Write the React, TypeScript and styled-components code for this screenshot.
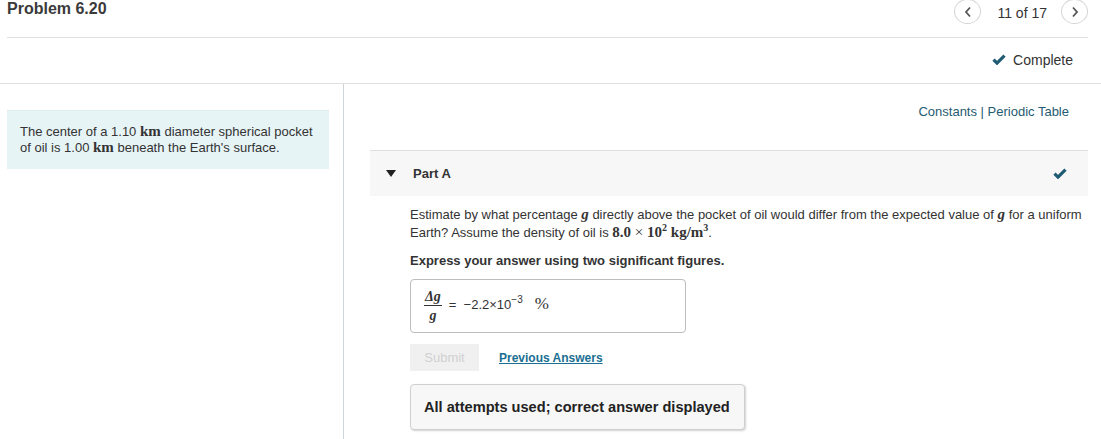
import React from 'react'
import styled, { createGlobalStyle } from 'styled-components'

const GlobalStyle = createGlobalStyle`
  body {
    margin: 0;
    background: #fff;
    font-family: "Liberation Sans", Arial, sans-serif;
    color: #333;
  }
`

const Page = styled.div`
  width: 1101px;
  height: 439px;
  overflow: hidden;
`

const TopBar = styled.div`
  display: flex;
  align-items: flex-start;
  justify-content: space-between;
  margin: 0 13px 0 7px;
  height: 37px;
  border-bottom: 1px solid #e0e0e0;
`

const Title = styled.div`
  font-size: 16px;
  font-weight: bold;
  color: #3a3a3a;
  line-height: 18px;
`

const Pager = styled.div`
  display: flex;
  align-items: center;
  margin-top: -1px;
`

const Circle = styled.div`
  width: 25px;
  height: 23px;
  border: 1px solid #d4d4d4;
  border-radius: 50%;
  display: flex;
  align-items: center;
  justify-content: center;
`

const PageCount = styled.span`
  font-size: 14px;
  color: #333;
  margin: 0 14px 0 16px;
  padding-top: 2px;
`

const StatusRow = styled.div`
  height: 45px;
  border-bottom: 1px solid #e0e0e0;
  display: flex;
  align-items: center;
  justify-content: flex-end;
  padding-right: 28px;
`

const Status = styled.div`
  display: flex;
  align-items: center;
  gap: 7px;
  font-size: 14px;
  color: #333;
  margin-top: -2px;
`

const Main = styled.div`
  display: grid;
  grid-template-columns: 344px 1fr;
  height: 355px;
`

const LeftCol = styled.div`
  border-right: 1px solid #cfd4d8;
  padding: 26px 14px 0 7px;
`

const Intro = styled.div`
  background: #e7f4f6;
  border-top: 1px solid #dcecef;
  padding: 13px 13px 13px;
  font-size: 13px;
  line-height: 16px;
  color: #333;
`

const MathBold = styled.span`
  font-family: "Liberation Serif", "DejaVu Serif", serif;
  font-weight: bold;
  font-size: 15px;
  line-height: 1;
`

const MathItalic = styled.span`
  font-family: "Liberation Serif", "DejaVu Serif", serif;
  font-weight: bold;
  font-style: italic;
  font-size: 15px;
  line-height: 1;
`

const Sup = styled.span`
  font-size: 10px;
  position: relative;
  top: -6px;
  line-height: 1;
`

const RightCol = styled.div`
  padding: 0 13px 0 26px;
`

const Links = styled.div`
  text-align: right;
  font-size: 13px;
  color: #1f5b72;
  padding: 20px 19px 0 0;
  height: 66px;
  box-sizing: border-box;
`

const Part = styled.div`
  border-top: 1px solid #e0e0e0;
`

const PartHeader = styled.div`
  display: flex;
  align-items: center;
  height: 45px;
  background: #f7f7f7;
  padding: 0 21px 0 16px;
`

const PartTitle = styled.div`
  flex: 1;
  font-size: 13px;
  font-weight: bold;
  color: #333;
  margin-left: 17px;
`

const PartBody = styled.div`
  padding: 10px 0 0 40px;
`

const Question = styled.div`
  font-size: 13px;
  line-height: 18px;
  color: #333;
`

const Instruction = styled.div`
  font-size: 13px;
  font-weight: bold;
  color: #333;
  margin-top: 11px;
`

const AnswerBox = styled.div`
  margin-top: 11px;
  width: 261px;
  height: 52px;
  border: 1px solid #bdbdbd;
  border-radius: 4px;
  display: flex;
  align-items: center;
  padding-left: 13px;
  font-size: 13px;
`

const Fraction = styled.span`
  display: inline-flex;
  flex-direction: column;
  align-items: center;
  font-family: "Liberation Serif", "DejaVu Serif", serif;
  font-weight: bold;
  font-style: italic;
  font-size: 14px;
  line-height: 15px;
  margin-right: 7px;
`

const Numerator = styled.span`
  border-bottom: 1px solid #333;
  padding: 0 1px 1px;
`

const Denominator = styled.span`
  padding-top: 2px;
`

const Value = styled.span`
  color: #333;
  margin-top: -4px;
`

const Percent = styled.span`
  font-family: "Liberation Serif", "DejaVu Serif", serif;
  font-size: 17px;
  margin-left: 12px;
  margin-top: -4px;
`

const Actions = styled.div`
  display: flex;
  align-items: center;
  gap: 20px;
  margin-top: 11px;
`

const SubmitButton = styled.div`
  width: 69px;
  height: 27px;
  background: #f0f0f0;
  color: #d0d0d0;
  font-size: 13px;
  display: flex;
  align-items: center;
  justify-content: center;
`

const PrevLink = styled.a`
  font-size: 12px;
  font-weight: bold;
  color: #1a6f92;
  text-decoration: underline;
`

const Notice = styled.div`
  margin-top: 13px;
  width: 320px;
  height: 44px;
  background: #f7f7f7;
  border: 1px solid #cfcfcf;
  border-radius: 4px;
  box-shadow: 1px 1px 2px rgba(0, 0, 0, 0.18);
  display: flex;
  align-items: center;
  padding-left: 13px;
  font-size: 14.6px;
  font-weight: bold;
  color: #222;
`

const Check = ({ size = 14 }: { size?: number }) => (
  <svg width={size} height={size * 0.8} viewBox="0 0 14 11">
    <path d="M1.5 5.5 L5 9 L12.5 1.5" fill="none" stroke="#1f5b72" strokeWidth="3.2" strokeLinejoin="miter" />
  </svg>
)

const Chevron = ({ dir }: { dir: 'left' | 'right' }) => (
  <svg width="8" height="12" viewBox="0 0 8 12">
    <path
      d={dir === 'left' ? 'M6 1.5 L2 6 L6 10.5' : 'M2 1.5 L6 6 L2 10.5'}
      fill="none"
      stroke="#555"
      strokeWidth="1.8"
    />
  </svg>
)

const Triangle = () => (
  <svg width="10" height="7" viewBox="0 0 10 7">
    <path d="M0 0 L10 0 L5 7 Z" fill="#222" />
  </svg>
)

const App = () => (
  <Page>
    <GlobalStyle />
    <TopBar>
      <Title>Problem 6.20</Title>
      <Pager>
        <Circle><Chevron dir="left" /></Circle>
        <PageCount>11 of 17</PageCount>
        <Circle><Chevron dir="right" /></Circle>
      </Pager>
    </TopBar>
    <StatusRow>
      <Status><Check />Complete</Status>
    </StatusRow>
    <Main>
      <LeftCol>
        <Intro>
          The center of a 1.10 <MathBold>km</MathBold> diameter spherical pocket of oil is 1.00{' '}
          <MathBold>km</MathBold> beneath the Earth's surface.
        </Intro>
      </LeftCol>
      <RightCol>
        <Links>Constants | Periodic Table</Links>
        <Part>
          <PartHeader>
            <Triangle />
            <PartTitle>Part A</PartTitle>
            <Check />
          </PartHeader>
          <PartBody>
            <Question>
              Estimate by what percentage <MathItalic>g</MathItalic> directly above the pocket of oil would differ
              from the expected value of <MathItalic>g</MathItalic> for a uniform Earth? Assume the density of oil is{' '}
              <MathBold>
                8.0 <span style={{ fontWeight: 'normal' }}>×</span> 10<Sup>2</Sup> kg/m<Sup>3</Sup>
              </MathBold>
              .
            </Question>
            <Instruction>Express your answer using two significant figures.</Instruction>
            <AnswerBox>
              <Fraction>
                <Numerator>Δg</Numerator>
                <Denominator>g</Denominator>
              </Fraction>
              <Value>
                = &nbsp;−2.2×10<Sup>−3</Sup>
              </Value>
              <Percent>%</Percent>
            </AnswerBox>
            <Actions>
              <SubmitButton>Submit</SubmitButton>
              <PrevLink>Previous Answers</PrevLink>
            </Actions>
            <Notice>All attempts used; correct answer displayed</Notice>
          </PartBody>
        </Part>
      </RightCol>
    </Main>
  </Page>
)

export default App
